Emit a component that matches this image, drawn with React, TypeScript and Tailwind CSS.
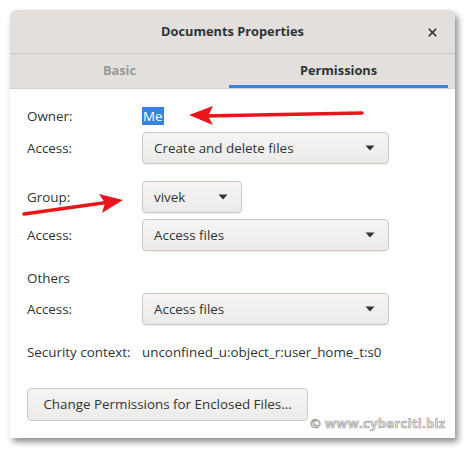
import { X } from "lucide-react";

function Caret() {
  return (
    <svg width="10" height="6" viewBox="0 0 10 6" className="shrink-0">
      <path d="M0.5 0.5 L9.5 0.5 L5 5.5 Z" fill="#2e3436" />
    </svg>
  );
}

function Combo({ label, width }: { label: string; width: string }) {
  return (
    <div
      className={`${width} h-[32px] flex items-center justify-between pl-[11px] pr-[13px] rounded-[4px] border border-[#cdc7c2] bg-gradient-to-b from-[#f6f5f4] to-[#edebe9] shadow-[0_1px_0_rgba(0,0,0,0.05)]`}
    >
      <span>{label}</span>
      <Caret />
    </div>
  );
}

export default function App() {
  return (
    <div
      className="relative w-[474px] h-[455px] bg-white pt-[10px] pl-[10px] text-[13.4px] text-[#2e3436]"
      style={{ fontFamily: '"Open Sans", "Noto Sans", sans-serif' }}
    >
      <div className="w-[445px] h-[428px] flex flex-col bg-white rounded-t-[6px] shadow-[3px_4px_6px_rgba(0,0,0,0.45)] overflow-hidden">
        <div className="h-[44px] relative flex items-center justify-center bg-[#e2dfdc] border-b border-[#cbc7c3] font-bold text-[12.8px]">
          Documents Properties
          <X className="absolute right-[16px] top-[16px] w-[13px] h-[13px]" strokeWidth={3.2} />
        </div>
        <div className="h-[35px] flex bg-[#e2dfdc] border-b border-[#d6d2ce] text-[12.8px]">
          <div className="flex-1 flex items-center justify-center text-[#959a9b] font-bold">Basic</div>
          <div className="flex-1 flex items-center justify-center font-bold border-b-[3px] border-[#3584e4] mr-[7px] pt-[3px]">
            Permissions
          </div>
        </div>
        <div className="flex-1 flex flex-col pl-[17px]">
          <div className="flex items-center mt-[17px] h-[20px]">
            <span className="w-[115px]">Owner:</span>
            <span className="bg-[#3584e4] text-white px-[1px] leading-[18px]">Me</span>
          </div>
          <div className="flex items-center mt-[6px]">
            <span className="w-[115px]">Access:</span>
            <Combo label="Create and delete files" width="w-[247px]" />
          </div>
          <div className="flex items-center mt-[17px]">
            <span className="w-[115px]">Group:</span>
            <Combo label="vivek" width="w-[100px]" />
          </div>
          <div className="flex items-center mt-[6px]">
            <span className="w-[115px]">Access:</span>
            <Combo label="Access files" width="w-[247px]" />
          </div>
          <div className="h-[20px] mt-[17px] flex items-center">Others</div>
          <div className="flex items-center mt-[5px]">
            <span className="w-[115px]">Access:</span>
            <Combo label="Access files" width="w-[247px]" />
          </div>
          <div className="flex items-center mt-[17px] h-[20px]">
            <span className="w-[115px]">Security context:</span>
            <span>unconfined_u:object_r:user_home_t:s0</span>
          </div>
          <div className="mt-[26px] w-[281px] h-[33px] flex items-center justify-center rounded-[4px] border border-[#cdc7c2] bg-gradient-to-b from-[#f6f5f4] to-[#edebe9]">
            Change Permissions for Enclosed Files…
          </div>
        </div>
      </div>
      <div
        className="absolute left-[310px] top-[414px] text-[13px] font-bold text-[#e4e4e4] tracking-[0.3px]"
        style={{ WebkitTextStroke: "0.6px #9a9a9a" }}
      >
        © www.cyberciti.biz
      </div>
      <svg className="absolute left-0 top-0 pointer-events-none" width="474" height="455">
        <path d="M362 113 L203 116" stroke="#e8161b" strokeWidth="3.5" strokeLinecap="round" fill="none" />
        <path d="M189 115 L213 106 L208 116 L213 125 Z" fill="#e8161b" />
        <path d="M24 214 L110 202" stroke="#e8161b" strokeWidth="3.5" strokeLinecap="round" fill="none" />
        <path d="M123 200 L99 194 L105 203 L102 213 Z" fill="#e8161b" />
      </svg>
    </div>
  );
}
